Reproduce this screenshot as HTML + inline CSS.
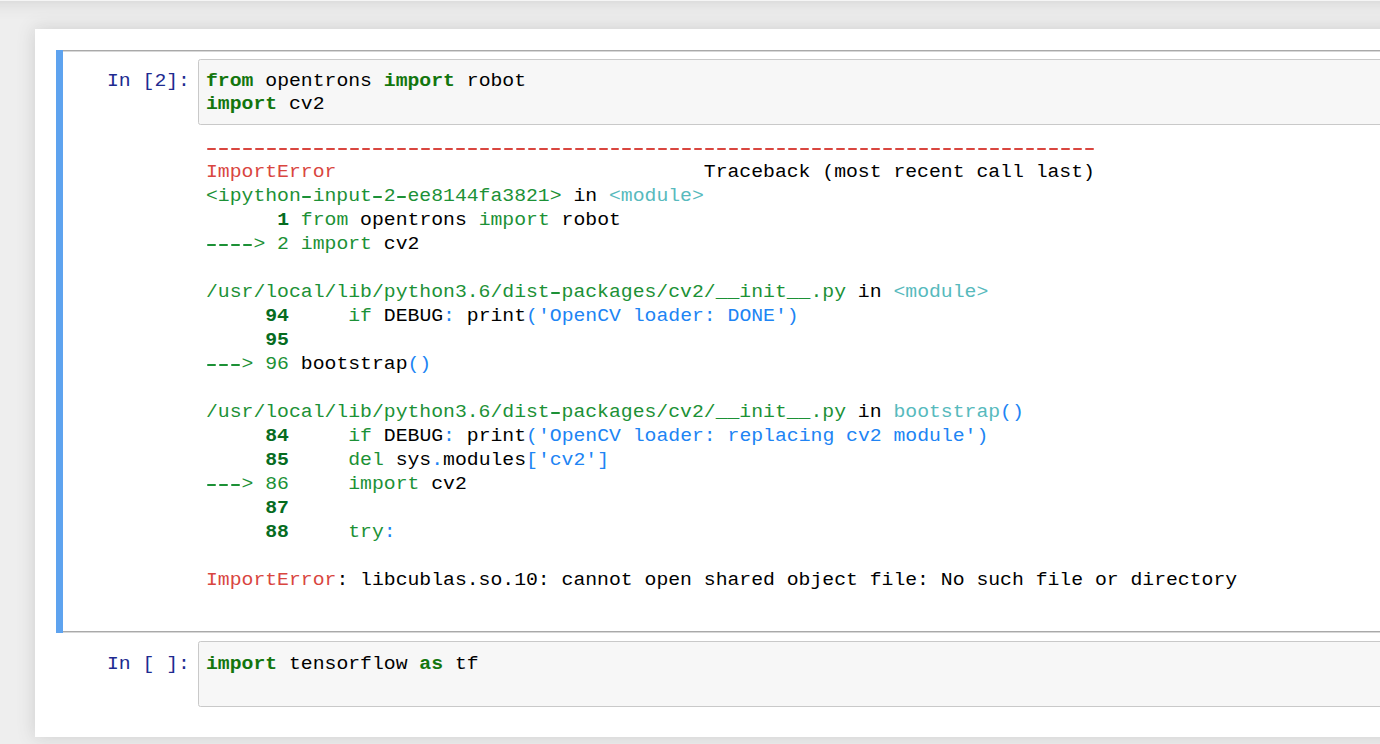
<!DOCTYPE html>
<html><head><meta charset="utf-8"><style>
html,body{margin:0;padding:0;width:1380px;height:744px;overflow:hidden;background:#eeeeee;position:relative}
#hdr{position:absolute;left:-50px;top:-100px;width:1500px;height:101px;background:#f5f5f5;box-shadow:0 0 17px 1.4px rgba(87,87,87,0.2)}
#nc{position:absolute;left:35px;top:29px;width:1600px;height:708px;background:#fff;box-shadow:0 0 17px 1.4px rgba(87,87,87,0.2)}
#cell1{position:absolute;left:56px;top:50px;width:1600px;height:580px;border:1px solid #a9a9a9;border-left:none;border-radius:2px;box-shadow:inset 0 1px 0 #d8d8d8,0 1px 0 #d8d8d8}

.dsh{position:absolute;width:8.9px;height:2.1px;border-radius:1px}
#blue1{position:absolute;left:56px;top:50px;width:7px;height:583px;background:#5ea3ef}
.ia{position:absolute;left:198px;width:1600px;background:#f7f7f7;border:1px solid #c9c9c9;border-radius:2.5px;box-sizing:border-box}
.ln{position:absolute;font-family:"Liberation Mono",monospace;font-size:19.76px;line-height:24px;height:24px;white-space:pre;color:#000;transform:scaleY(0.89);transform-origin:0 17px}
.k{color:#13760e;font-weight:bold}
.p{color:#1e2b90}
.r{color:#d9463f}
.g{color:#1c9136}
.gb{color:#066c1f;font-weight:bold}
.c{color:#57babd}
.b{color:#2084f4}
</style></head><body>
<div id="hdr"></div>
<div id="nc"></div>
<div id="cell1"></div>
<div id="blue1"></div>
<div class="ia" style="top:59px;height:66px"></div>
<div class="ia" style="top:641.4px;height:65.6px"></div>
<div class="ln" style="left:206px;top:68.7px"><span class="k">from</span> opentrons <span class="k">import</span> robot</div>
<div class="ln" style="left:206px;top:92.4px"><span class="k">import</span> cv2</div>
<div class="ln" style="left:107px;top:68.9px"><span class="p">In [2]:</span></div>
<div class="ln" style="left:206px;top:136px"><span class="r">                                                                           </span></div>
<div class="dsh" style="left:207.40px;top:147.70px;background:#d9463f"></div><div class="dsh" style="left:219.26px;top:147.70px;background:#d9463f"></div><div class="dsh" style="left:231.12px;top:147.70px;background:#d9463f"></div><div class="dsh" style="left:242.97px;top:147.70px;background:#d9463f"></div><div class="dsh" style="left:254.83px;top:147.70px;background:#d9463f"></div><div class="dsh" style="left:266.69px;top:147.70px;background:#d9463f"></div><div class="dsh" style="left:278.55px;top:147.70px;background:#d9463f"></div><div class="dsh" style="left:290.41px;top:147.70px;background:#d9463f"></div><div class="dsh" style="left:302.26px;top:147.70px;background:#d9463f"></div><div class="dsh" style="left:314.12px;top:147.70px;background:#d9463f"></div><div class="dsh" style="left:325.98px;top:147.70px;background:#d9463f"></div><div class="dsh" style="left:337.84px;top:147.70px;background:#d9463f"></div><div class="dsh" style="left:349.70px;top:147.70px;background:#d9463f"></div><div class="dsh" style="left:361.55px;top:147.70px;background:#d9463f"></div><div class="dsh" style="left:373.41px;top:147.70px;background:#d9463f"></div><div class="dsh" style="left:385.27px;top:147.70px;background:#d9463f"></div><div class="dsh" style="left:397.13px;top:147.70px;background:#d9463f"></div><div class="dsh" style="left:408.98px;top:147.70px;background:#d9463f"></div><div class="dsh" style="left:420.84px;top:147.70px;background:#d9463f"></div><div class="dsh" style="left:432.70px;top:147.70px;background:#d9463f"></div><div class="dsh" style="left:444.56px;top:147.70px;background:#d9463f"></div><div class="dsh" style="left:456.42px;top:147.70px;background:#d9463f"></div><div class="dsh" style="left:468.27px;top:147.70px;background:#d9463f"></div><div class="dsh" style="left:480.13px;top:147.70px;background:#d9463f"></div><div class="dsh" style="left:491.99px;top:147.70px;background:#d9463f"></div><div class="dsh" style="left:503.85px;top:147.70px;background:#d9463f"></div><div class="dsh" style="left:515.71px;top:147.70px;background:#d9463f"></div><div class="dsh" style="left:527.56px;top:147.70px;background:#d9463f"></div><div class="dsh" style="left:539.42px;top:147.70px;background:#d9463f"></div><div class="dsh" style="left:551.28px;top:147.70px;background:#d9463f"></div><div class="dsh" style="left:563.14px;top:147.70px;background:#d9463f"></div><div class="dsh" style="left:575.00px;top:147.70px;background:#d9463f"></div><div class="dsh" style="left:586.85px;top:147.70px;background:#d9463f"></div><div class="dsh" style="left:598.71px;top:147.70px;background:#d9463f"></div><div class="dsh" style="left:610.57px;top:147.70px;background:#d9463f"></div><div class="dsh" style="left:622.43px;top:147.70px;background:#d9463f"></div><div class="dsh" style="left:634.29px;top:147.70px;background:#d9463f"></div><div class="dsh" style="left:646.14px;top:147.70px;background:#d9463f"></div><div class="dsh" style="left:658.00px;top:147.70px;background:#d9463f"></div><div class="dsh" style="left:669.86px;top:147.70px;background:#d9463f"></div><div class="dsh" style="left:681.72px;top:147.70px;background:#d9463f"></div><div class="dsh" style="left:693.58px;top:147.70px;background:#d9463f"></div><div class="dsh" style="left:705.43px;top:147.70px;background:#d9463f"></div><div class="dsh" style="left:717.29px;top:147.70px;background:#d9463f"></div><div class="dsh" style="left:729.15px;top:147.70px;background:#d9463f"></div><div class="dsh" style="left:741.01px;top:147.70px;background:#d9463f"></div><div class="dsh" style="left:752.86px;top:147.70px;background:#d9463f"></div><div class="dsh" style="left:764.72px;top:147.70px;background:#d9463f"></div><div class="dsh" style="left:776.58px;top:147.70px;background:#d9463f"></div><div class="dsh" style="left:788.44px;top:147.70px;background:#d9463f"></div><div class="dsh" style="left:800.30px;top:147.70px;background:#d9463f"></div><div class="dsh" style="left:812.15px;top:147.70px;background:#d9463f"></div><div class="dsh" style="left:824.01px;top:147.70px;background:#d9463f"></div><div class="dsh" style="left:835.87px;top:147.70px;background:#d9463f"></div><div class="dsh" style="left:847.73px;top:147.70px;background:#d9463f"></div><div class="dsh" style="left:859.59px;top:147.70px;background:#d9463f"></div><div class="dsh" style="left:871.44px;top:147.70px;background:#d9463f"></div><div class="dsh" style="left:883.30px;top:147.70px;background:#d9463f"></div><div class="dsh" style="left:895.16px;top:147.70px;background:#d9463f"></div><div class="dsh" style="left:907.02px;top:147.70px;background:#d9463f"></div><div class="dsh" style="left:918.88px;top:147.70px;background:#d9463f"></div><div class="dsh" style="left:930.73px;top:147.70px;background:#d9463f"></div><div class="dsh" style="left:942.59px;top:147.70px;background:#d9463f"></div><div class="dsh" style="left:954.45px;top:147.70px;background:#d9463f"></div><div class="dsh" style="left:966.31px;top:147.70px;background:#d9463f"></div><div class="dsh" style="left:978.17px;top:147.70px;background:#d9463f"></div><div class="dsh" style="left:990.02px;top:147.70px;background:#d9463f"></div><div class="dsh" style="left:1001.88px;top:147.70px;background:#d9463f"></div><div class="dsh" style="left:1013.74px;top:147.70px;background:#d9463f"></div><div class="dsh" style="left:1025.60px;top:147.70px;background:#d9463f"></div><div class="dsh" style="left:1037.46px;top:147.70px;background:#d9463f"></div><div class="dsh" style="left:1049.31px;top:147.70px;background:#d9463f"></div><div class="dsh" style="left:1061.17px;top:147.70px;background:#d9463f"></div><div class="dsh" style="left:1073.03px;top:147.70px;background:#d9463f"></div><div class="dsh" style="left:1084.89px;top:147.70px;background:#d9463f"></div>
<div class="ln" style="left:206px;top:160px"><span class="r">ImportError</span>                               Traceback (most recent call last)</div>
<div class="ln" style="left:206px;top:184px"><span class="g">&lt;ipython input 2 ee8144fa3821&gt;</span> in <span class="c">&lt;module&gt;</span></div>
<div class="dsh" style="left:302.26px;top:195.70px;background:#1c9136"></div><div class="dsh" style="left:373.41px;top:195.70px;background:#1c9136"></div><div class="dsh" style="left:397.13px;top:195.70px;background:#1c9136"></div>
<div class="ln" style="left:206px;top:208px">      <span class="gb">1</span> <span class="g">from</span> opentrons <span class="g">import</span> robot</div>
<div class="ln" style="left:206px;top:232px"><span class="g">    &gt; 2</span> <span class="g">import</span> cv2</div>
<div class="dsh" style="left:207.40px;top:243.70px;background:#1c9136"></div><div class="dsh" style="left:219.26px;top:243.70px;background:#1c9136"></div><div class="dsh" style="left:231.12px;top:243.70px;background:#1c9136"></div><div class="dsh" style="left:242.97px;top:243.70px;background:#1c9136"></div>
<div class="ln" style="left:206px;top:280px"><span class="g">/usr/local/lib/python3.6/dist packages/cv2/__init__.py</span> in <span class="c">&lt;module&gt;</span></div>
<div class="dsh" style="left:551.28px;top:291.70px;background:#1c9136"></div>
<div class="ln" style="left:206px;top:304px">     <span class="gb">94</span>     <span class="g">if</span> DEBUG<span class="b">:</span> print<span class="b">(&#x27;OpenCV loader: DONE&#x27;)</span></div>
<div class="ln" style="left:206px;top:328px">     <span class="gb">95</span></div>
<div class="ln" style="left:206px;top:352px"><span class="g">   &gt; 96</span> bootstrap<span class="b">()</span></div>
<div class="dsh" style="left:207.40px;top:363.70px;background:#1c9136"></div><div class="dsh" style="left:219.26px;top:363.70px;background:#1c9136"></div><div class="dsh" style="left:231.12px;top:363.70px;background:#1c9136"></div>
<div class="ln" style="left:206px;top:400px"><span class="g">/usr/local/lib/python3.6/dist packages/cv2/__init__.py</span> in <span class="c">bootstrap</span><span class="b">()</span></div>
<div class="dsh" style="left:551.28px;top:411.70px;background:#1c9136"></div>
<div class="ln" style="left:206px;top:424px">     <span class="gb">84</span>     <span class="g">if</span> DEBUG<span class="b">:</span> print<span class="b">(&#x27;OpenCV loader: replacing cv2 module&#x27;)</span></div>
<div class="ln" style="left:206px;top:448px">     <span class="gb">85</span>     <span class="g">del</span> sys<span class="b">.</span>modules<span class="b">[&#x27;cv2&#x27;]</span></div>
<div class="ln" style="left:206px;top:472px"><span class="g">   &gt; 86</span>     <span class="g">import</span> cv2</div>
<div class="dsh" style="left:207.40px;top:483.70px;background:#1c9136"></div><div class="dsh" style="left:219.26px;top:483.70px;background:#1c9136"></div><div class="dsh" style="left:231.12px;top:483.70px;background:#1c9136"></div>
<div class="ln" style="left:206px;top:496px">     <span class="gb">87</span></div>
<div class="ln" style="left:206px;top:520px">     <span class="gb">88</span>     <span class="g">try</span><span class="b">:</span></div>
<div class="ln" style="left:206px;top:568px"><span class="r">ImportError</span>: libcublas.so.10: cannot open shared object file: No such file or directory</div>
<div class="ln" style="left:107px;top:652.1px"><span class="p">In [ ]:</span></div>
<div class="ln" style="left:206px;top:652.1px"><span class="k">import</span> tensorflow <span class="k">as</span> tf</div>
</body></html>
